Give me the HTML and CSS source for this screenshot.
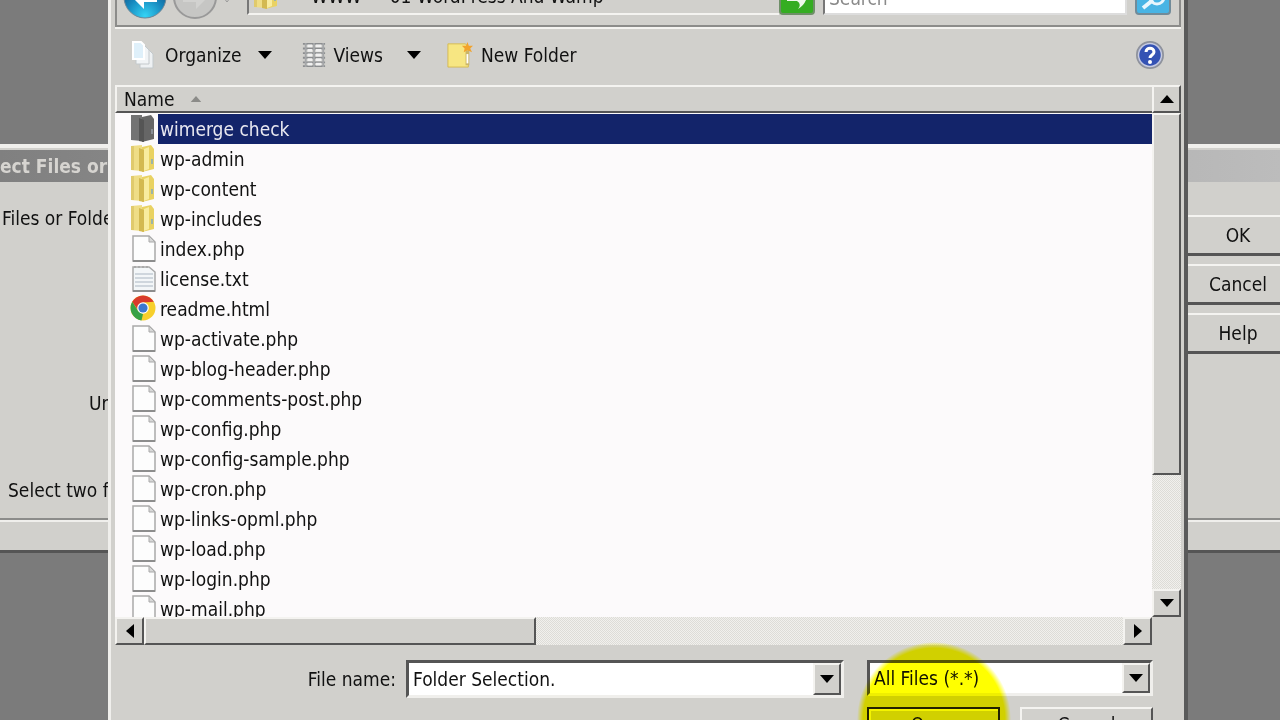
FILE: index.html
```
<!DOCTYPE html>
<html lang="en">
<head>
  <meta charset="UTF-8">
  <title>Open</title>
  <link rel="stylesheet" href="styles.css">
</head>
<body>
  <svg class="sprites" aria-hidden="true">
    <symbol id="folder" viewBox="0 0 26 28">
      <path d="M1 1 L12 0 V26 L1 25Z" fill="#efdd86"/>
      <path d="M1 1 L4 1 V25 L1 25Z" fill="#e0ca6c"/>
      <path d="M12 2 L21 0 L24 4 V24 L12 27Z" fill="#e9d263"/>
      <path d="M9 3 L14 5 V27 L9 26Z" fill="#d3b950"/>
      <path d="M14 4 L19 2 V24 L14 26Z" fill="#f8ec9f"/>
      <path d="M21 14 h2 v5 h-2z" fill="#9cb4a8"/>
    </symbol>
    <symbol id="folder-dark" viewBox="0 0 26 28">
      <path d="M1 0 L12 0 V26 L1 25Z" fill="#737373"/>
      <path d="M12 2 L21 0 L24 4 V24 L12 27Z" fill="#666"/>
      <path d="M9 3 L14 5 V27 L9 26Z" fill="#555"/>
      <path d="M21 14 h2 v5 h-2z" fill="#8a8f96"/>
    </symbol>
    <symbol id="page" viewBox="0 0 26 28">
      <path d="M3 1 H19 L25 7 V26 H3Z" fill="#fdfdfd" stroke="#a9a9a9" stroke-width="1.5"/>
      <path d="M3 26 H25" stroke="#8d8d8d" stroke-width="2"/>
      <path d="M19 1 V7 H25Z" fill="#d8d8d8" stroke="#a9a9a9"/>
    </symbol>
    <symbol id="text" viewBox="0 0 26 28">
      <path d="M3 2 H19 L25 7 V26 H3Z" fill="#f3f6f8" stroke="#a9a9a9" stroke-width="1.5"/>
      <path d="M4 2 h16" stroke="#aaa" stroke-width="2" stroke-dasharray="2 2"/>
      <path d="M5 9H23M5 13H23M5 17H23M5 21H23" stroke="#c3ccd4" stroke-width="1.5"/>
      <path d="M3 26 H25" stroke="#8d8d8d" stroke-width="2"/>
    </symbol>
    <symbol id="chrome" viewBox="0 0 26 28">
      <circle cx="13" cy="13" r="12.5" fill="#f7cf2c"/>
      <path d="M2.2 6.8 A12.5 12.5 0 0 1 23.8 6.8 L13 7.5 L8 15Z" fill="#d93a2b"/>
      <path d="M2.2 6.8 L8.2 16 L13 19 L11.5 25.4 A12.5 12.5 0 0 1 2.2 6.8Z" fill="#37a246"/>
      <circle cx="13" cy="13" r="5.8" fill="#fff"/>
      <circle cx="13" cy="13" r="4.6" fill="#3b78d0"/>
    </symbol>
    <symbol id="down" viewBox="0 0 14 8"><path d="M0 0H14L7 8Z"/></symbol>
    <symbol id="up" viewBox="0 0 14 8"><path d="M0 8H14L7 0Z"/></symbol>
    <symbol id="left" viewBox="0 0 8 14"><path d="M8 0V14L0 7Z"/></symbol>
    <symbol id="right" viewBox="0 0 8 14"><path d="M0 0V14L8 7Z"/></symbol>
  </svg>

  <!-- window behind the dialog -->
  <section class="back-window">
    <h2 class="back-title">ect Files or</h2>
    <div class="back-body">
      <div class="back-labels">
        <p class="label-files">Files or Folde</p>
        <p class="label-un">Ur</p>
        <p class="label-select">Select two f</p>
      </div>
      <div class="back-buttons">
        <button>OK</button>
        <button>Cancel</button>
        <button>Help</button>
      </div>
    </div>
    <div class="back-status"></div>
  </section>

  <main class="dialog">
    <div class="address-bar">
      <button class="nav" aria-label="Back">
        <svg width="44" height="44" viewBox="0 0 44 44"><defs><radialGradient id="blue" cx="50%" cy="95%" r="75%"><stop offset="0" stop-color="#35d4f5"/><stop offset=".6" stop-color="#1687bd"/><stop offset="1" stop-color="#155a8c"/></radialGradient></defs><circle cx="22" cy="22" r="21" fill="url(#blue)" stroke="#6d8797"/><path d="M9 22 L21 10 V17 H34 V27 H21 V34Z" fill="#fff"/></svg>
      </button>
      <button class="nav" aria-label="Forward">
        <svg width="44" height="44" viewBox="0 0 44 44"><circle cx="22" cy="22" r="21" fill="#c6c6c4" stroke="#999" stroke-width="2"/><path d="M35 22 L23 10 V17 H10 V27 H23 V34Z" fill="#d2d2d0"/></svg>
      </button>
      <svg class="recent" width="8" height="6"><path d="M1 1L4 5L7 1" fill="none" stroke="#999"/></svg>
      <div class="crumbs">
        <svg width="26" height="28"><use href="#folder"/></svg>
        <a href="#" class="crumb-www">WWW</a>
        <a href="#" class="crumb-site">01 WordPress And Wamp</a>
      </div>
      <button class="go" aria-label="Go">
        <svg width="36" height="36" viewBox="0 0 36 36"><rect x="1" y="1" width="34" height="34" rx="3" fill="#35ad22" stroke="#6f8f68" stroke-width="2"/><path d="M8 13H18V5L28 18Q26 26 19 30Q23 25 18 22H8Z" fill="#eef8ea"/></svg>
      </button>
      <input class="search" type="text" placeholder="Search" aria-label="Search">
      <button class="go" aria-label="Find">
        <svg width="36" height="36" viewBox="0 0 36 36"><rect x="1" y="1" width="34" height="34" rx="3" fill="#48b4e4" stroke="#718b99" stroke-width="2"/><path d="M8 29L18 21" stroke="#e8f6fd" stroke-width="4"/><circle cx="22" cy="18" r="7" fill="none" stroke="#e8f6fd" stroke-width="3"/></svg>
      </button>
    </div>

    <div class="toolbar">
      <button class="tool organize">
        <svg width="26" height="28" viewBox="0 0 26 28"><path d="M9 9H18L22 13V27H9Z" fill="#eef1f3" stroke="#c3c9cc"/><path d="M5 5H14L18 9V23H5Z" fill="#f1f4f6" stroke="#c3c9cc"/><path d="M2 1H10L13 4V18H2Z" fill="#dff0fa" stroke="#fff" stroke-width="2"/></svg>
        Organize
        <svg class="caret" width="14" height="8"><use href="#down"/></svg>
      </button>
      <button class="tool views">
        <svg width="24" height="28" viewBox="0 0 26 28"><path d="M1 2H25M1 7H25M1 12H25M1 17H25M1 22H25M1 26H25" stroke="#8b8d8f" stroke-width="2"/><path d="M4 1V27M13 1V27M23 1V27" stroke="#a5a7a9" stroke-width="2"/><path d="M6 4h5M6 9h5M6 14h5M6 19h5M6 24h5M15 4h6M15 9h6M15 14h6M15 19h6M15 24h6" stroke="#f0f0f0" stroke-width="3"/></svg>
        Views
        <svg class="caret" width="14" height="8"><use href="#down"/></svg>
      </button>
      <button class="tool">
        <svg width="26" height="28" viewBox="0 0 28 28"><path d="M1 2H20L23 6V27H1Z" fill="#f7e682" stroke="#d4b851"/><path d="M20 9H24V25H20Z" fill="#cbb568"/><path d="M22 13V23" stroke="#fff" stroke-width="2"/><path d="M22 0L23.500 4L28 4L25 7L27 11L22 9L18 11L19 7L16 4L20.500 4Z" fill="#f2a32c"/></svg>
        New Folder
      </button>
      <button class="help" aria-label="Help">
        <svg width="30" height="30" viewBox="0 0 30 30"><circle cx="15" cy="15" r="13" fill="#3452b4" stroke="#8e929c" stroke-width="2"/><circle cx="15" cy="15" r="11.500" fill="none" stroke="#c7cbe0" stroke-width="1.500"/><path d="M11 12C11 7 19 7 19 12C19 15 15 15 15 18" fill="none" stroke="#fff" stroke-width="3"/><circle cx="15" cy="22" r="2" fill="#fff"/></svg>
      </button>
    </div>

    <div class="browser">
      <div class="files">
        <button class="column-name">Name <svg width="12" height="6" viewBox="0 0 14 8" fill="#8b8b88"><use href="#up"/></svg></button>
        <ul class="file-list">
          <li class="selected"><svg width="26" height="28"><use href="#folder-dark"/></svg><span>wimerge check</span></li>
          <li><svg width="26" height="28"><use href="#folder"/></svg><span>wp-admin</span></li>
          <li><svg width="26" height="28"><use href="#folder"/></svg><span>wp-content</span></li>
          <li><svg width="26" height="28"><use href="#folder"/></svg><span>wp-includes</span></li>
          <li><svg width="26" height="28"><use href="#page"/></svg><span>index.php</span></li>
          <li><svg width="26" height="28"><use href="#text"/></svg><span>license.txt</span></li>
          <li><svg width="26" height="28"><use href="#chrome"/></svg><span>readme.html</span></li>
          <li><svg width="26" height="28"><use href="#page"/></svg><span>wp-activate.php</span></li>
          <li><svg width="26" height="28"><use href="#page"/></svg><span>wp-blog-header.php</span></li>
          <li><svg width="26" height="28"><use href="#page"/></svg><span>wp-comments-post.php</span></li>
          <li><svg width="26" height="28"><use href="#page"/></svg><span>wp-config.php</span></li>
          <li><svg width="26" height="28"><use href="#page"/></svg><span>wp-config-sample.php</span></li>
          <li><svg width="26" height="28"><use href="#page"/></svg><span>wp-cron.php</span></li>
          <li><svg width="26" height="28"><use href="#page"/></svg><span>wp-links-opml.php</span></li>
          <li><svg width="26" height="28"><use href="#page"/></svg><span>wp-load.php</span></li>
          <li><svg width="26" height="28"><use href="#page"/></svg><span>wp-login.php</span></li>
          <li><svg width="26" height="28"><use href="#page"/></svg><span>wp-mail.php</span></li>
        </ul>
      </div>
      <div class="scroll-v">
        <button class="raised" aria-label="Scroll up"><svg width="14" height="8"><use href="#up"/></svg></button>
        <div class="track"><div class="thumb raised"></div></div>
        <button class="raised" aria-label="Scroll down"><svg width="14" height="8"><use href="#down"/></svg></button>
      </div>
      <div class="scroll-h">
        <button class="raised" aria-label="Scroll left"><svg width="8" height="14"><use href="#left"/></svg></button>
        <div class="track"><div class="thumb raised"></div></div>
        <button class="raised" aria-label="Scroll right"><svg width="8" height="14"><use href="#right"/></svg></button>
      </div>
    </div>

    <form class="footer">
      <label for="file-name">File name:</label>
      <div class="combo">
        <input id="file-name" type="text" value="Folder Selection.">
        <button type="button" class="raised" aria-label="Show names"><svg width="14" height="8"><use href="#down"/></svg></button>
      </div>
      <div class="right-side">
        <div class="combo filter">
          <select aria-label="File type"><option>All Files (*.*)</option></select>
          <span class="raised"><svg width="14" height="8"><use href="#down"/></svg></span>
        </div>
        <div class="actions">
          <button type="button" class="default">Open</button>
          <button type="button">Cancel</button>
        </div>
        <div class="highlight"></div>
      </div>
    </form>
  </main>
</body>
</html>
```
FILE: styles.css
```
* {
  box-sizing: border-box;
}

body {
  margin: 0;
  height: 100vh;
  position: relative;
  overflow: hidden;
  background: #7b7b7b;
  color: #111;
  font-family: "DejaVu Sans Condensed", "DejaVu Sans", sans-serif;
  font-size: 19px;
}

button, input, select {
  font: inherit;
  color: inherit;
  border: none;
  border-radius: 0;
  background: none;
  margin: 0;
  padding: 0;
}

svg {
  flex: none;
}

.sprites {
  position: absolute;
  width: 0;
  height: 0;
}

.raised {
  display: flex;
  align-items: center;
  justify-content: center;
  background: #d1d0cc;
  border: 2px solid;
  border-color: #f4f3f0 #555 #555 #f4f3f0;
}

/* window behind */
.back-window {
  position: absolute;
  top: 144px;
  left: 0;
  right: 0;
  background: #d1d0cc;
  border-top: 4px solid #f0efec;
  border-bottom: 3px solid #555;
}

.back-title {
  margin: 2px 0 0;
  height: 32px;
  line-height: 32px;
  font-size: 19px;
  color: #d6d4d0;
  background: linear-gradient(90deg, #808080, #bcbcbc);
}

.back-body {
  display: flex;
  justify-content: space-between;
  height: 338px;
  border-bottom: 2px solid #8c8c8a;
}

.back-labels {
  width: 108px;
  overflow: hidden;
  white-space: nowrap;
}

.back-labels p {
  margin: 0;
  line-height: 24px;
}

.label-files {
  padding: 24px 0 0 2px;
}

.back-labels .label-un {
  margin-top: 161px;
  padding-left: 89px;
}

.back-labels .label-select {
  margin-top: 63px;
  padding-left: 8px;
}

.back-buttons {
  width: 92px;
  padding-top: 33px;
  display: flex;
  flex-direction: column;
  gap: 8px;
}

.back-buttons button {
  height: 41px;
  padding-left: 8px;
  border-top: 2px solid #f4f3f0;
  border-bottom: 3px solid #555;
}

.back-status {
  height: 30px;
  border-top: 2px solid #f0efec;
}

/* dialog */
.dialog {
  position: relative;
  height: 100vh;
  margin: 0 92px 0 108px;
  padding: 0 3px 0 4px;
  display: flex;
  flex-direction: column;
  overflow: hidden;
  background: #d1d0cc;
  border-left: 3px solid #f0efec;
  border-right: 4px solid #5a5a5a;
}

.address-bar {
  height: 27px;
  flex: none;
  display: flex;
  align-items: flex-end;
  padding: 0 8px 10px 6px;
  border: solid #8c8c8a;
  border-width: 0 2px 2px;
  box-shadow: 0 2px #f4f3f0;
  overflow: hidden;
}

.nav {
  height: 44px;
  margin: 0 6px -4px 0;
}

.recent {
  margin-bottom: 12px;
}

.crumbs {
  flex: 1;
  height: 36px;
  margin-left: 16px;
  padding-left: 4px;
  display: flex;
  align-items: center;
  white-space: nowrap;
  border-left: 2px solid #777;
  border-bottom: 2px solid #f4f3f0;
}

.crumbs a {
  color: inherit;
  text-decoration: none;
}

.crumb-www {
  margin-left: 32px;
}

.crumb-site {
  margin-left: 28px;
}

.go {
  height: 36px;
}

.search {
  width: 304px;
  height: 38px;
  margin: 0 8px;
  padding: 4px 0 0 4px;
  background: #fff;
  border: 2px solid;
  border-color: #777 #ddd #ddd #777;
}

.search::placeholder {
  color: #8a8a8a;
}

.toolbar {
  height: 58px;
  flex: none;
  display: flex;
  align-items: center;
  padding: 0 16px 3px;
  gap: 26px;
}

.tool {
  display: flex;
  align-items: center;
  gap: 8px;
}

.organize {
  margin-right: 4px;
}

.caret {
  margin-left: 8px;
}

.views .caret {
  margin-left: 16px;
}

.help {
  height: 30px;
  margin-left: auto;
}

/* file list */
.browser {
  flex: none;
  display: grid;
  grid-template-columns: 1fr 29px;
  grid-template-rows: 532px 28px;
}

.files {
  display: flex;
  flex-direction: column;
  overflow: hidden;
  background: #fcfafb;
}

.column-name {
  height: 28px;
  flex: none;
  display: flex;
  align-items: center;
  gap: 16px;
  padding-left: 7px;
  background: #d1d0cc;
  border-top: 2px solid #f4f3f0;
  border-left: 2px solid #f4f3f0;
  border-bottom: 2px solid #555;
}

.file-list {
  list-style: none;
  margin: 0;
  padding: 1px 0 0 15px;
}

.file-list li {
  display: flex;
  align-items: center;
  gap: 2px;
  height: 30px;
}

.file-list span {
  flex: 1;
  line-height: 30px;
  padding-left: 2px;
  white-space: nowrap;
}

.selected span {
  background: #13246a;
  color: #e8e8f0;
}

.track {
  flex: 1;
  background: repeating-conic-gradient(#dddcd7 0 25%, #f1f0ed 0 50%) 0 0 / 2px 2px;
}

.scroll-v {
  display: flex;
  flex-direction: column;
}

.scroll-v button {
  height: 28px;
}

.scroll-v .thumb {
  height: 76%;
}

.scroll-h {
  display: flex;
}

.scroll-h button {
  width: 29px;
}

.scroll-h .thumb {
  width: 40%;
  height: 100%;
}

/* bottom of the dialog */
.footer {
  flex: none;
  display: flex;
  align-items: flex-start;
  padding: 15px 28px 0 16px;
}

.footer label {
  flex: 1;
  text-align: right;
  line-height: 38px;
  margin-right: 10px;
}

.combo {
  display: flex;
  width: 438px;
  height: 38px;
  background: #fff;
  border: 3px solid;
  border-color: #555 #f0efec #f0efec #555;
}

.combo input,
.combo select {
  flex: 1;
  min-width: 0;
  padding-left: 4px;
  appearance: none;
}

.combo .raised {
  width: 28px;
}

.right-side {
  position: relative;
  width: 286px;
  margin-left: 23px;
}

.filter {
  width: 100%;
  height: 36px;
}

.actions {
  display: flex;
  justify-content: space-between;
  margin-top: 11px;
}

.actions button {
  width: 133px;
  height: 34px;
  border: 2px solid;
  border-color: #f4f3f0 #555 #555 #f4f3f0;
}

.actions .default {
  border: 2px solid #222;
  box-shadow: inset 2px 2px #f4f3f0;
}

/* yellow pointer spot */
.highlight {
  position: absolute;
  left: -10px;
  top: -18px;
  width: 154px;
  height: 154px;
  background: radial-gradient(closest-side, #ff0 92%, #fff);
  border-radius: 50%;
  mix-blend-mode: multiply;
  pointer-events: none;
}
```
